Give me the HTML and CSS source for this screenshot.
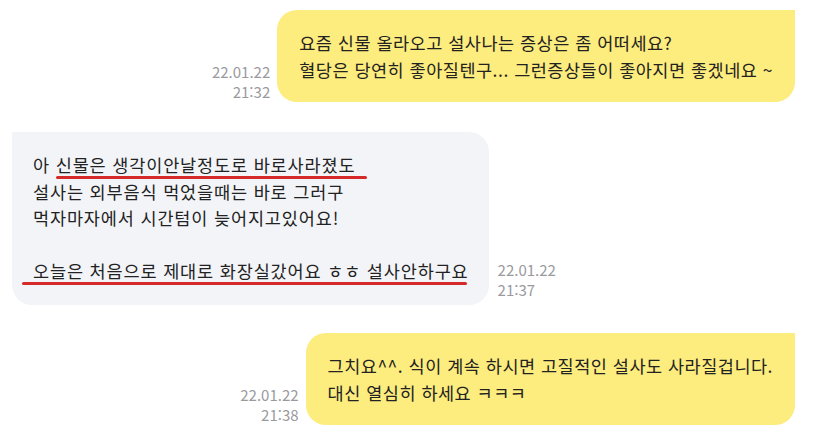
FILE: index.html
```html
<!DOCTYPE html>
<html lang="ko">
<head>
<meta charset="utf-8">
<link rel="stylesheet" href="styles.css">
</head>
<body>
<div class="chat">
  <div class="row out row1">
    <div class="time right">22.01.22<br>21:32</div>
    <div class="bubble mine">요즘 신물 올라오고 설사나는 증상은 좀 어떠세요?<br>혈당은 당연히 좋아질텐구... 그런증상들이 좋아지면 좋겠네요 ~</div>
  </div>
  <div class="row in row2">
    <div class="bubble theirs">아 <span class="mark mark1">신물은 생각이안날정도로 바로사라졌도</span><br>설사는 외부음식 먹었을때는 바로 그러구<br>먹자마자에서 시간텀이 늦어지고있어요!<br><br><span class="mark mark2">오늘은 처음으로 제대로 화장실갔어요 ㅎㅎ 설사안하구요</span></div>
    <div class="time left">22.01.22<br>21:37</div>
  </div>
  <div class="row out row3">
    <div class="time right">22.01.22<br>21:38</div>
    <div class="bubble mine">그치요^^. 식이 계속 하시면 고질적인 설사도 사라질겁니다.<br>대신 열심히 하세요 ㅋㅋㅋ</div>
  </div>
</div>
</body>
</html>
```
FILE: styles.css
```css
html, body {
  margin: 0;
  padding: 0;
  background: #ffffff;
}
body {
  font-family: "Noto Sans CJK KR", "Noto Sans", sans-serif;
  color: #222222;
  width: 833px;
  height: 441px;
  overflow: hidden;
}
.chat {
  display: flex;
  flex-direction: column;
  padding: 10px 38px 0 12px;
}
.row {
  display: flex;
  align-items: flex-end;
}
.row.out {
  justify-content: flex-end;
}
.row2 {
  margin-top: 30px;
}
.row3 {
  margin-top: 28px;
}
.bubble {
  font-size: 17.5px;
  line-height: 27px;
  letter-spacing: 0.5px;
  white-space: nowrap;
}
.mine {
  background: #fdec7e;
  border-radius: 20px 0 20px 20px;
  padding: 19px 22px 19px 22px;
}
.theirs {
  background: #f3f4f8;
  border-radius: 0 20px 20px 20px;
  padding: 20px 20px 20px 21px;
  line-height: 26.5px;
  letter-spacing: 0.85px;
}
.mark {
  position: relative;
}
.mark::after {
  content: "";
  position: absolute;
  height: 3px;
  background: #d42a2a;
  border-radius: 2px;
  bottom: -2px;
}
.mark1::after {
  left: 0;
  right: -12px;
}
.mark2::after {
  left: -11px;
  right: 2px;
}
.time {
  font-size: 15px;
  line-height: 20px;
  color: #9a9a9e;
  letter-spacing: 0;
  margin-bottom: 0;
}
.time.right {
  text-align: right;
  margin-right: 7px;
}
.time.left {
  text-align: left;
  margin-left: 9px;
  margin-bottom: 5px;
}
```
